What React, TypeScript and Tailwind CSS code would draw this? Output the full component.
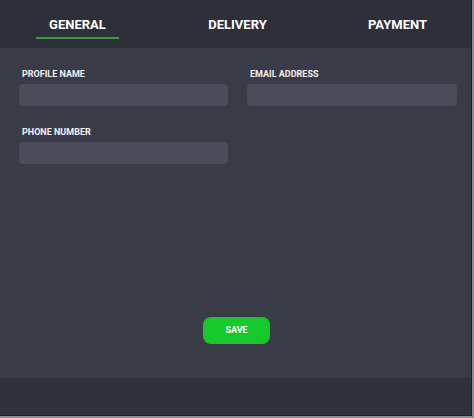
const tabs = ['GENERAL', 'DELIVERY', 'PAYMENT'];

function Field({ label }: { label: string }) {
  return (
    <div className="flex flex-col">
      <label className="pl-[3px] text-[9px] font-bold leading-[12px] text-[#f1f1f4]">{label}</label>
      <div className="mt-[4px] h-[22px] rounded-[4px] bg-[#4a4c59]" />
    </div>
  );
}

export default function App() {
  return (
    <div className="h-[418px] w-[474px] bg-[#8c8e94] font-['Roboto',sans-serif]">
      <div className="flex h-[416px] w-[472px] flex-col overflow-hidden border-r border-b border-[#1d1e24]">
        {/* Tabs */}
        <div className="grid h-[48px] grid-cols-[155px_165px_155px] bg-[#2e3039]">
          {tabs.map((tab, i) => (
            <div key={tab} className="relative flex items-start justify-center pt-[16px]">
              <span className="text-[13px] font-bold leading-[17px] text-white">{tab}</span>
              {i === 0 && (
                <span className="absolute top-[37px] left-[36px] h-[2px] w-[83px] bg-[#3a9b3a]" />
              )}
            </div>
          ))}
        </div>

        {/* Form */}
        <div className="flex flex-1 flex-col bg-[#393b47] pt-[20px] pl-[19px]">
          <div className="grid grid-cols-[209px_210px] gap-x-[19px] gap-y-[20px]">
            <Field label="PROFILE NAME" />
            <Field label="EMAIL ADDRESS" />
            <Field label="PHONE NUMBER" />
          </div>
          <div className="mt-[153px] flex pl-[184px]">
            <button className="h-[27px] w-[67px] rounded-[8px] bg-[#16c92a] text-[9px] font-bold text-white">
              SAVE
            </button>
          </div>
        </div>

        {/* Footer */}
        <div className="h-[37px] bg-[#30323b]" />
      </div>
    </div>
  );
}
